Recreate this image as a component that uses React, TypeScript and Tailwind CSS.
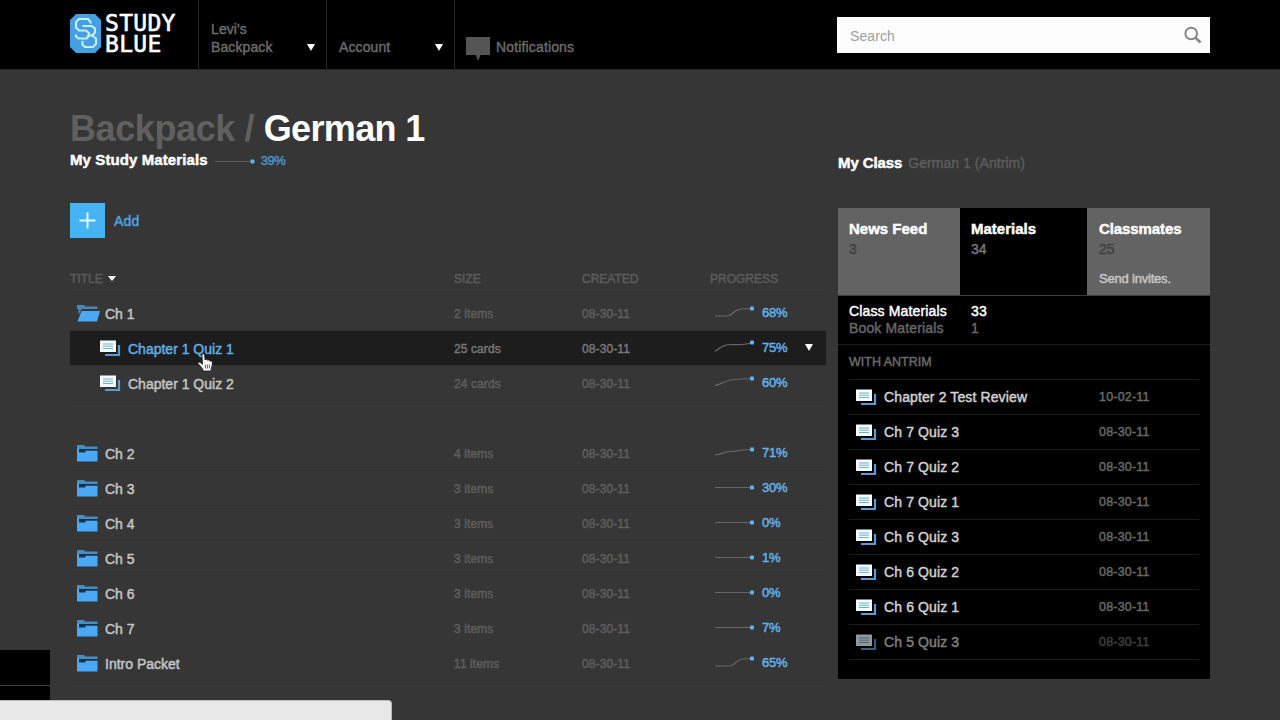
import React from 'react';

type Row = {
    title: string;
    kind: 'open' | 'folder' | 'cards';
    size: string;
    progress: number;
    line: string; // sparkline path, ends at the dot
    active?: boolean;
};

const FLAT = 'M1 8.5 L38 8.5';

const openRows: Row[] = [
    { title: 'Ch 1', kind: 'open', size: '2 items', progress: 68, line: 'M1 12 H13 C19 12 20 5 27 5 L38 4.5' },
    { title: 'Chapter 1 Quiz 1', kind: 'cards', size: '25 cards', progress: 75, line: 'M1 12.5 C8 6 13 5.5 19 5.5 C28 6 33 5.5 38 3.5', active: true },
    { title: 'Chapter 1 Quiz 2', kind: 'cards', size: '24 cards', progress: 60, line: 'M1 11.5 C8 10 13 5.5 20 5.5 L38 4.5' },
];

const folderRows: Row[] = [
    { title: 'Ch 2', kind: 'folder', size: '4 items', progress: 71, line: 'M1 11 C8 10 10 8 16 7.5 C24 7.5 26 5.5 38 5.5' },
    { title: 'Ch 3', kind: 'folder', size: '3 items', progress: 30, line: FLAT },
    { title: 'Ch 4', kind: 'folder', size: '3 items', progress: 0, line: FLAT },
    { title: 'Ch 5', kind: 'folder', size: '3 items', progress: 1, line: FLAT },
    { title: 'Ch 6', kind: 'folder', size: '3 items', progress: 0, line: FLAT },
    { title: 'Ch 7', kind: 'folder', size: '3 items', progress: 7, line: FLAT },
    { title: 'Intro Packet', kind: 'folder', size: '11 items', progress: 65, line: 'M1 12 H14 C22 12 22 5 29 5 L38 4.5' },
];

const classMaterials = [
    { title: 'Chapter 2 Test Review', date: '10-02-11' },
    { title: 'Ch 7 Quiz 3', date: '08-30-11' },
    { title: 'Ch 7 Quiz 2', date: '08-30-11' },
    { title: 'Ch 7 Quiz 1', date: '08-30-11' },
    { title: 'Ch 6 Quiz 3', date: '08-30-11' },
    { title: 'Ch 6 Quiz 2', date: '08-30-11' },
    { title: 'Ch 6 Quiz 1', date: '08-30-11' },
    { title: 'Ch 5 Quiz 3', date: '08-30-11', faded: true },
];

const Caret = ({ className = '' }: { className?: string }) => (
    <svg className={className} width="8" height="7" viewBox="0 0 8 7">
        <path d="M0 0H8L4 7Z" fill="#fff" />
    </svg>
);

const CardsIcon = () => (
    <svg width="21" height="17" viewBox="0 0 21 17" className="shrink-0">
        <path d="M5 15H19V5" fill="none" stroke="#5a9ad6" strokeWidth="2.2" />
        <rect x="0" y="0.5" width="16" height="11.5" fill="#f4fbff" />
        <path d="M3 4H13M3 6.2H13M3 8.5H13" stroke="#6fb0c8" strokeWidth="1" />
    </svg>
);

const FolderIcon = () => (
    <svg width="21" height="18" viewBox="0 0 21 18" className="shrink-0">
        <path d="M0 1H7.5V2.5H20.5V5H0Z" fill="#4a8dc0" />
        <path d="M2 5H20.5V6.5H8.5V8.5H2Z" fill="#16334e" />
        <path d="M0 8.5H8.5V6.8H20.5V17.5H0Z" fill="#4aa8f4" />
        <path d="M0 4.5H2V9H0Z" fill="#4aa8f4" />
    </svg>
);

const OpenFolderIcon = () => (
    <svg width="23" height="18" viewBox="0 0 23 18" className="shrink-0">
        <path d="M0 1H7.5V2.5H20.5V5H4.5L1.5 11V5H0Z" fill="#4a86b8" />
        <path d="M4.5 7H23L20 17.5H0.5Z" fill="#4aa8f4" />
    </svg>
);

const Sparkline = ({ d }: { d: string }) => {
    const [x, y] = d.split(/[ML]/).pop()!.trim().split(' ').slice(-2);
    return (
        <svg width="42" height="17" viewBox="0 0 42 17" className="mt-[-2px] shrink-0">
            <path d={d} fill="none" stroke="#666" strokeWidth="1.2" />
            <rect x={Number(x) - 2} y={Number(y) - 2} width="4" height="4" rx="1" fill="#5fb4ee" />
        </svg>
    );
};

const Logo = () => (
    <div className="flex w-[128px] shrink-0">
        <svg width="31" height="39" viewBox="0 0 31 39" className="mt-[14px] shrink-0">
            <path d="M6 0H25L31 6V33L25 39H6L0 33V6Z" fill="#459fe0" />
            <g fill="none" stroke="#c4efff" strokeWidth="2.1" strokeLinejoin="round">
                <path d="M20.5 9.5V8L18 5H9L6 8V13.5L9 16.5H16L19 19V22L16.5 24.5H8.5L6 22.5V20.5" />
                <path d="M12.5 12H22L25 14.5V18.5L22 21.5H17M22.5 21.5L26 24.5V30L23 33H15L12.5 31V27" />
            </g>
        </svg>
        <div className="ml-[4px] mt-[13px] font-['DejaVu_Sans_Mono',monospace] text-[23px] leading-[21px] tracking-[0.3px] text-white [-webkit-text-stroke:0.6px_#fff]">
            STUDY
            <br />
            BLUE
        </div>
    </div>
);

const Header = () => (
    <header className="flex h-[70px] shrink-0 border-b border-[#282828] bg-black pl-[70px] text-[14px] leading-[18px] text-[#6a6a6a]">
        <Logo />
        <div className="flex w-[128px] items-end justify-between border-l border-[#2b2b2b] pb-[13px] pl-[12px] pr-[11px]">
            <div className="tracking-[0.1px]">
                <div>Levi's</div>
                <div>Backpack</div>
            </div>
            <Caret className="mb-[5px]" />
        </div>
        <div className="flex w-[128px] items-end justify-between border-l border-[#2b2b2b] pb-[13px] pl-[12px] pr-[11px]">
            <div className="tracking-[0.1px]">Account</div>
            <Caret className="mb-[5px]" />
        </div>
        <div className="flex w-[383px] items-end border-l border-[#2b2b2b] pb-[13px] pl-[11px]">
            <svg width="25" height="24" viewBox="0 0 25 24" className="mb-[-5px] mr-[5px]">
                <path d="M0 0H24V18H14.5L12.5 23H11.5L10 18H0Z" fill="#555" />
            </svg>
            <div className="tracking-[0.15px]">Notifications</div>
        </div>
        <div className="mt-[17px] flex h-[36px] w-[373px] items-center justify-between bg-[#fdfdfd] pl-[13px] pr-[8px] text-[#a0a0a0]">
            <span className="pt-px tracking-[0.1px] [-webkit-text-stroke:0]">Search</span>
            <svg width="18" height="18" viewBox="0 0 18 18" className="mb-[1px]">
                <circle cx="7.2" cy="7.5" r="5.8" fill="none" stroke="#858585" strokeWidth="2" />
                <path d="M11.5 11.8L16.5 16.5" stroke="#858585" strokeWidth="2.6" />
            </svg>
        </div>
    </header>
);

const MaterialRow = ({ row }: { row: Row }) => (
    <div className={`flex h-[35px] items-center border-b border-[#323232] ${row.active ? 'bg-[#1d1d1d]' : ''}`}>
        <div className={`flex w-[384px] items-center ${row.kind === 'cards' ? 'pl-[30px]' : 'pl-[7px]'}`}>
            <div className="w-[28px]">
                {row.kind === 'cards' && <CardsIcon />}
                {row.kind === 'folder' && <FolderIcon />}
                {row.kind === 'open' && <OpenFolderIcon />}
            </div>
            <span className={`pt-[2px] ${row.active ? 'text-[#62b0ea]' : 'text-[#c6c6c6]'}`}>{row.title}</span>
        </div>
        <div className={`w-[128px] pt-[2px] text-[12px] tracking-[0.1px] ${row.active ? 'text-[#777]' : 'text-[#5e5e5e]'}`}>{row.size}</div>
        <div className={`w-[128px] pt-[2px] text-[12px] tracking-[0.1px] ${row.active ? 'text-[#777]' : 'text-[#5e5e5e]'}`}>08-30-11</div>
        <div className="flex w-[95px] items-center pl-[4px]">
            <Sparkline d={row.line} />
            <span className="ml-[6px] text-[13px] tracking-[-0.3px] text-[#62b4ee]">{row.progress}%</span>
        </div>
        {row.active && <Caret className="mt-[-1px]" />}
    </div>
);

const MyMaterials = () => (
    <main className="w-[756px] shrink-0 pt-[39px]">
        <h1 className="text-[36px] font-bold leading-[40px] tracking-[-0.65px] text-white [-webkit-text-stroke:0]">
            <span className="tracking-[-0.4px] text-[#606060]">Backpack / </span>German 1
        </h1>
        <div className="flex h-[23px] items-center">
            <span className="text-[15px] font-bold tracking-[0.1px] text-white">My Study Materials</span>
            <svg width="42" height="7" viewBox="0 0 42 7" className="ml-[6px] mt-[1px]">
                <path d="M1 3.5H38" stroke="#5e5e5e" strokeWidth="1.2" />
                <rect x="36.5" y="1.5" width="4" height="4" rx="1" fill="#5fb4ee" />
            </svg>
            <span className="ml-[5px] mt-[1px] text-[13px] tracking-[-0.4px] text-[#4c94c8]">39%</span>
        </div>
        <div className="mt-[31px] flex h-[35px] items-center">
            <div className="flex h-[35px] w-[35px] items-center justify-center bg-[#46b4f2]">
                <svg width="17" height="17" viewBox="0 0 17 17">
                    <path d="M8.5 0.5V16.5M0.5 8.5H16.5" stroke="#e8faff" strokeWidth="2" />
                </svg>
            </div>
            <span className="ml-[9px] pt-px tracking-[0.2px] text-[#4fa5e0]">Add</span>
        </div>
        <div className="mt-[24px] flex h-[34px] items-center border-b border-[#323232] text-[12px] text-[#5c5c5c]">
            <div className="flex w-[384px] items-center">
                TITLE
                <svg width="8" height="5" viewBox="0 0 8 5" className="mb-[1px] ml-[5px]">
                    <path d="M0 0H8L4 5Z" fill="#fff" />
                </svg>
            </div>
            <div className="w-[128px]">SIZE</div>
            <div className="w-[128px]">CREATED</div>
            <div>PROGRESS</div>
        </div>
        {openRows.map((row) => (
            <MaterialRow key={row.title} row={row} />
        ))}
        <div className="h-[35px]" />
        {folderRows.map((row) => (
            <MaterialRow key={row.title} row={row} />
        ))}
    </main>
);

const ClassPanel = () => (
    <aside className="ml-[12px] w-[372px] pt-[82px]">
        <div className="flex h-[22px] items-center gap-[6px]">
            <span className="text-[15px] font-bold tracking-[-0.1px] text-white">My Class</span>
            <span className="tracking-[0.05px] text-[#5c5c5c]">German 1 (Antrim)</span>
        </div>
        <div className="mt-[34px] h-[471px] bg-black">
            <div className="flex h-[88px] border-b border-[#3c3c3c] leading-[20px]">
                <div className="w-[122px] bg-[#636363] pl-[11px] pt-[11px]">
                    <div className="text-[15px] font-bold text-white">News Feed</div>
                    <div className="text-[#404040]">3</div>
                </div>
                <div className="w-[127px] pl-[11px] pt-[11px]">
                    <div className="text-[15px] font-bold text-white">Materials</div>
                    <div className="text-[#777]">34</div>
                </div>
                <div className="w-[123px] bg-[#636363] pl-[12px] pt-[11px]">
                    <div className="text-[15px] font-bold tracking-[-0.1px] text-white">Classmates</div>
                    <div className="text-[#404040]">25</div>
                    <div className="mt-[10px] text-[13px] tracking-[-0.2px] text-[#c8c8c8]">Send invites.</div>
                </div>
            </div>
            <div className="h-[49px] border-b border-[#1e1e1e] pl-[11px] pt-[7px] leading-[17px]">
                <div className="flex tracking-[0.15px] text-white">
                    <span className="w-[122px]">Class Materials</span>
                    <span>33</span>
                </div>
                <div className="flex tracking-[0.15px] text-[#666]">
                    <span className="w-[122px]">Book Materials</span>
                    <span>1</span>
                </div>
            </div>
            <div className="px-[11px]">
                <div className="flex h-[35px] items-center border-b border-[#1e1e1e] text-[12.5px] text-[#6a6a6a]">WITH ANTRIM</div>
                {classMaterials.map((m) => (
                    <div key={m.title} className="flex h-[35px] items-center border-b border-[#1e1e1e]">
                        <div className={`flex w-full items-center pl-[7px] ${m.faded ? 'opacity-60' : ''}`}>
                            <CardsIcon />
                            <span className="ml-[7px] w-[215px] tracking-[0.12px] text-[#d2d2d2]">{m.title}</span>
                            <span className="text-[12.5px] tracking-[0.2px] text-[#686868]">{m.date}</span>
                        </div>
                    </div>
                ))}
            </div>
        </div>
    </aside>
);

const HandCursor = () => (
    <svg className="absolute left-[197px] top-[353px]" width="17" height="19" viewBox="0 0 17 19">
        <path
            d="M5 1.8C5 .3 7.5 .3 7.6 1.8L8 7C9 5.9 10.3 6.2 10.5 7.3C11.5 6.6 12.7 7 12.9 8.1C14 7.6 15.3 8.2 15.3 9.5C15.3 13 14.5 14 13.8 18H6.5C5.5 15 3 12.5 1.3 10.8C.3 9.6 2 8.6 3.2 9.6L5.5 11.4Z"
            fill="#fff"
            stroke="#222"
            strokeWidth="0.8"
        />
        <path d="M8.4 11.5V15.5M10.4 11.5V15.5M12.4 11.5V15.5" stroke="#333" strokeWidth="0.8" />
    </svg>
);

const App: React.FC = () => {
    return (
        <div className="relative flex h-[720px] w-[1280px] flex-col overflow-hidden bg-[#363636] font-['Liberation_Sans',Arial,sans-serif] text-[14px] [-webkit-text-stroke:0.45px_currentColor]">
            <Header />
            <div className="flex pl-[70px]">
                <MyMaterials />
                <ClassPanel />
            </div>
            <HandCursor />
            {/* docked panel and browser status bar */}
            <div className="absolute left-0 top-[650px] h-[51px] w-[50px] bg-black pt-[35px]">
                <div className="h-px bg-[#404040]" />
            </div>
            <div className="absolute bottom-0 left-0 h-[20px] w-[392px] rounded-tr-[4px] border-r border-t border-[#bbb] bg-[#e8e8e8]" />
        </div>
    );
};

export default App;
